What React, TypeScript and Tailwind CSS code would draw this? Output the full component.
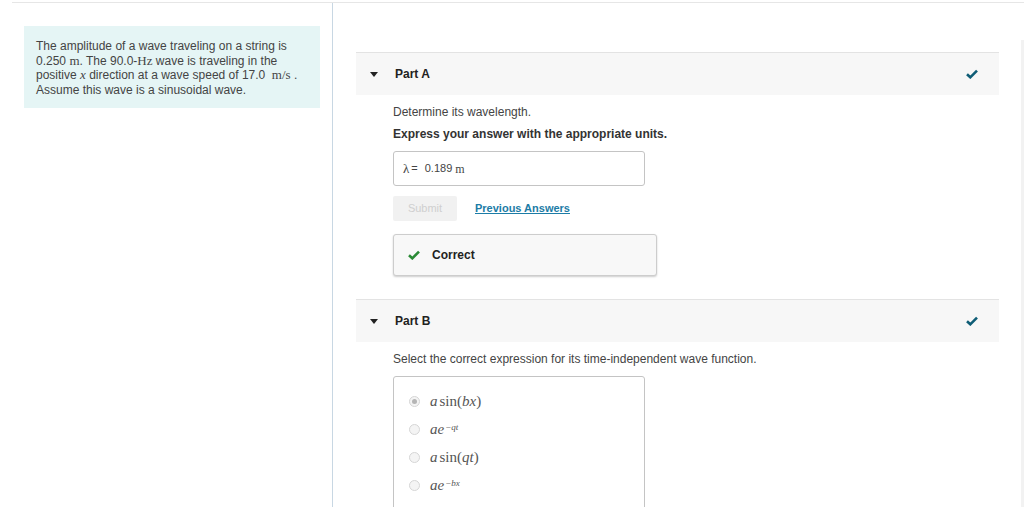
import React from "react";

/**
 * Mastering-style problem page: problem statement on the left,
 * collapsible parts with answers on the right.
 */

function TealCheck({ className = "" }: { className?: string }) {
  return (
    <svg viewBox="0 0 12 10" className={className} aria-hidden>
      <path d="M1 5.2 L4.3 8.3 L11 1.6" fill="none" stroke="currentColor" strokeWidth="2.6" strokeLinejoin="miter" />
    </svg>
  );
}

function PartHeader({ label }: { label: string }) {
  return (
    <div className="flex h-[43px] items-center border-t border-[#e3e3e3] bg-[#f7f7f7] pr-[21px]">
      <span className="ml-[14px] h-0 w-0 border-x-[4px] border-t-[5px] border-x-transparent border-t-[#222]" />
      <span className="ml-[17px] text-[12px] font-bold text-[#222]">{label}</span>
      <TealCheck className="ml-auto h-[10px] w-[12px] text-[#0f5d76]" />
    </div>
  );
}

function Radio({ checked }: { checked?: boolean }) {
  return (
    <span className="flex h-[11px] w-[11px] shrink-0 items-center justify-center rounded-full border border-[#d6d6d6] bg-[#f4f4f4]">
      {checked && <span className="h-[5px] w-[5px] rounded-full bg-[#b5b5b5]" />}
    </span>
  );
}

const serif = "font-['Liberation_Serif',serif]";

const options = [
  {
    id: "a",
    checked: true,
    body: (
      <>
        <i>a</i>
        <span className="ml-[2px]">sin(</span>
        <i>bx</i>
        <span>)</span>
      </>
    ),
  },
  {
    id: "b",
    body: (
      <>
        <i>ae</i>
        <sup className="ml-[1px] text-[9px] italic">−qt</sup>
      </>
    ),
  },
  {
    id: "c",
    body: (
      <>
        <i>a</i>
        <span className="ml-[2px]">sin(</span>
        <i>qt</i>
        <span>)</span>
      </>
    ),
  },
  {
    id: "d",
    body: (
      <>
        <i>ae</i>
        <sup className="ml-[1px] text-[9px] italic">−bx</sup>
      </>
    ),
  },
];

export default function App() {
  return (
    <div className="h-[507px] overflow-hidden bg-white font-['Liberation_Sans',Arial,sans-serif] text-[#333]">
      <div className="ml-3 mt-[2px] flex h-full border-t border-[#e6e6e6]">
        {/* Problem statement */}
        <aside className="w-[321px] shrink-0 border-r border-[#c8d7e3] pl-3 pr-3 pt-[23px]">
          <div className="bg-[#e5f5f5] px-3 pb-[11px] pt-[13px] text-[12px] leading-[14.5px] text-[#444]">
            <p className="whitespace-nowrap">
              The amplitude of a wave traveling on a string is
              <br />
              0.250 <span className={`${serif} text-[13px] leading-[14px]`}>m</span>. The 90.0-
              <span className={`${serif} text-[13px] leading-[14px]`}>Hz</span> wave is traveling in the
              <br />
              positive <i className={`${serif} text-[13px] leading-[14px]`}>x</i> direction at a wave speed of 17.0{" "}
              <span className={`${serif} text-[13px] leading-[14px]`}>&nbsp;m/s</span> .
              <br />
              Assume this wave is a sinusoidal wave.
            </p>
          </div>
        </aside>

        {/* Parts */}
        <main className="min-w-0 flex-1 pl-[23px] pr-[22px] pt-[49px]">
          <PartHeader label="Part A" />
          <div className="pl-[37px] text-[12px] text-[#444]">
            <p className="mt-[10px] leading-[14px]">Determine its wavelength.</p>
            <p className="mt-[8px] font-bold leading-[14px] text-[#333]">Express your answer with the appropriate units.</p>
            <div className="mt-[10px] flex h-[35px] w-[252px] items-center rounded-[3px] border border-[#c4c4c4] pl-[9px] text-[11px]">
              <span className={`${serif} text-[13px]`}>λ</span>
              <span className="ml-[2px]">=</span>
              <span className="ml-[7px]">0.189</span>
              <span className={`${serif} ml-[3px] text-[12px]`}>m</span>
            </div>
            <div className="mt-[10px] flex items-center">
              <span className="flex h-[25px] w-[64px] items-center justify-center rounded-[2px] bg-[#f1f1f1] text-[11px] text-[#cfcfcf]">
                Submit
              </span>
              <span className="ml-[18px] text-[11px] font-bold text-[#1c7ca6] underline">Previous Answers</span>
            </div>
            <div className="mt-[13px] flex h-[42px] w-[264px] items-center rounded-[3px] border border-[#cdcdcd] bg-[#f8f8f8] pl-[14px] shadow-[0_1px_2px_rgba(0,0,0,0.2)]">
              <TealCheck className="h-[10px] w-[12px] text-[#2a8a36]" />
              <span className="ml-[12px] text-[12px] font-bold text-[#222]">Correct</span>
            </div>
          </div>

          <div className="mt-[23px]">
            <PartHeader label="Part B" />
          </div>
          <div className="pl-[37px] text-[12px] text-[#444]">
            <p className="mt-[10px] leading-[14px]">Select the correct expression for its time-independent wave function.</p>
            <div className="mt-[10px] h-[160px] w-[252px] rounded-[3px] border border-[#c4c4c4] pl-[15px] pt-[15px]">
              <ul className="flex flex-col gap-[9px]">
                {options.map((o) => (
                  <li key={o.id} className="flex h-[19px] items-center">
                    <Radio checked={o.checked} />
                    <span className={`${serif} ml-[10px] text-[15px] text-[#555]`}>{o.body}</span>
                  </li>
                ))}
              </ul>
            </div>
          </div>
        </main>

        {/* Scrollbar edge */}
        <div className="mt-[37px] w-[3px] shrink-0 bg-[#f2f2f2]" />
      </div>
    </div>
  );
}
